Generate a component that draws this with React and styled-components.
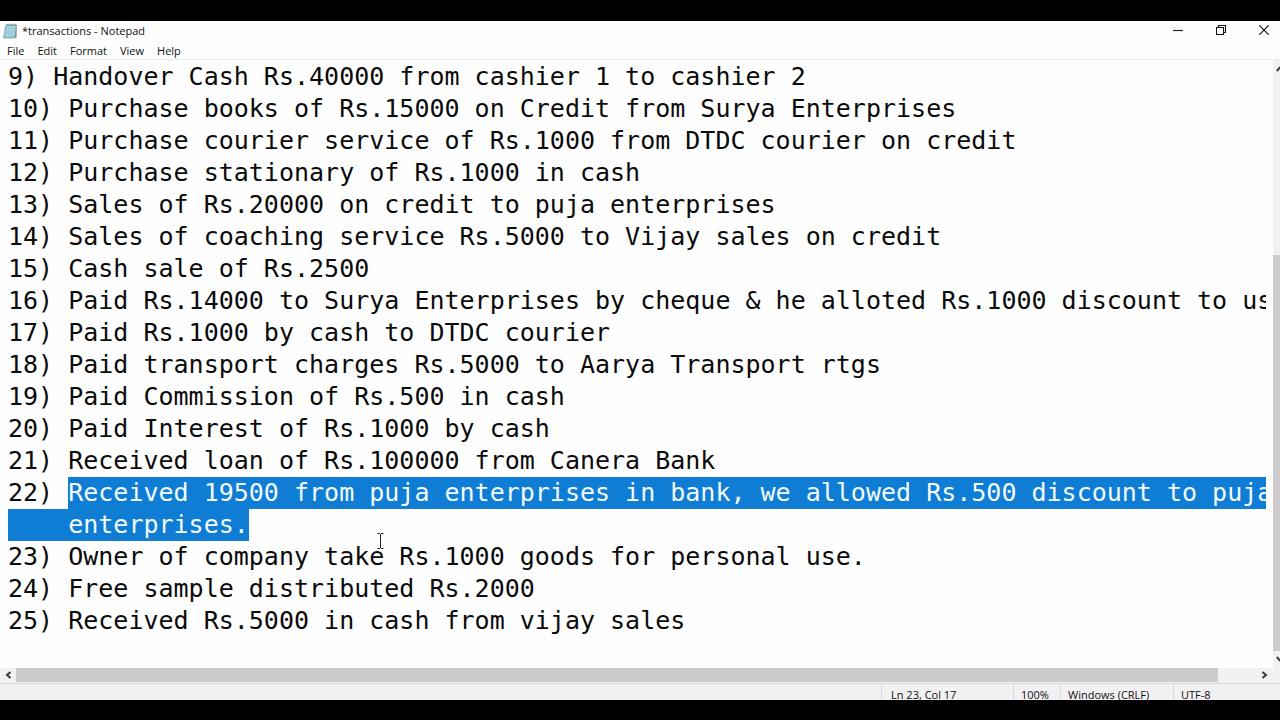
import React, { Component, createRef } from 'react';
import styled, { createGlobalStyle } from 'styled-components';

const GlobalStyle = createGlobalStyle`
  * {
    box-sizing: border-box;
  }

  body {
    margin: 0;
    background: #000;
  }
`

const Screen = styled.div`
  position: relative;
  display: flex;
  height: 100vh;
  padding: 21px 0 20px;
  background: #000;
  font-family: 'Open Sans', 'Noto Sans', sans-serif;
  font-size: 11px;
  color: #111;
  overflow: hidden;
`

const Window = styled.main`
  display: flex;
  flex: 1;
  flex-direction: column;
  min-width: 0;
  background: #fefefe;
`

const TitleBar = styled.header`
  display: flex;
  justify-content: space-between;
  align-items: flex-start;
  height: 20px;
  padding-left: 3px;
`

const TitleGroup = styled.div`
  display: flex;
  align-items: center;
  gap: 5px;
  height: 20px;
`

const Title = styled.h1`
  margin: 0;
  font-size: 11px;
  font-weight: 400;
  line-height: 20px;
`

const Controls = styled.div`
  display: flex;
  gap: 11px;
`

const PlainButton = styled.button`
  display: flex;
  justify-content: center;
  align-items: center;
  width: ${props => props.$width || 'auto'};
  height: ${props => props.$height || 'auto'};
  padding: 0;
  border: 0;
  background: none;
  color: inherit;
  font: inherit;
`

const MenuBar = styled.nav`
  display: flex;
  gap: 13px;
  height: 19px;
  padding-left: 7px;
  border-bottom: 1px solid #ededed;
`

const Body = styled.div`
  display: grid;
  flex: 1;
  grid-template-columns: minmax(0, 1fr) 7px;
  grid-template-rows: minmax(0, 1fr) 15px;
  min-height: 0;
`

const Editor = styled.textarea`
  display: block;
  width: calc(100% - 7px);
  height: 100%;
  margin: 0;
  padding: 1px 0 0 8px;
  border: 0;
  outline: 0;
  background: transparent;
  color: #0a0a0a;
  caret-color: transparent;
  font-family: 'DejaVu Sans Mono', 'Liberation Mono', monospace;
  font-size: 25px;
  line-height: 32px;
  white-space: pre;
  resize: none;
  overflow: hidden;

  &::selection {
    background: #0f7dd4;
    color: #f2fbff;
  }
`

const VerticalBar = styled.div`
  display: flex;
  flex-direction: column;
  background: #f1f1f1;
  overflow: hidden;
`

const HorizontalBar = styled.div`
  display: flex;
  grid-column: 1 / -1;
  padding-right: 7px;
  background: #f1f0f2;
`

const Track = styled.div`
  display: flex;
  flex: 1;
  flex-direction: ${props => props.$vertical ? 'column' : 'row'};
  justify-content: ${props => props.$vertical ? 'flex-end' : 'flex-start'};
`

const Thumb = styled.div`
  flex: 0 0 ${props => props.$size};
  margin-bottom: ${props => props.$vertical ? 0 : '1px'};
  background: #cdcbcd;
`

const StatusBar = styled.footer`
  display: flex;
  justify-content: flex-end;
  height: 17px;
  border-top: 1px solid #d9d8da;
  background: #f1f0f2;
  overflow: hidden;
`

const StatusCell = styled.span`
  flex: 0 0 ${props => props.$width};
  padding-left: ${props => props.$indent || '7px'};
  border-left: 1px solid #d9d8da;
  line-height: 22px;
  white-space: nowrap;
`

const Pointer = styled.svg`
  position: absolute;
  left: 377px;
  top: 533px;
`

const menus = ['File', 'Edit', 'Format', 'View', 'Help']

const selected = `Received 19500 from puja enterprises in bank, we allowed Rs.500 discount to puja
    enterprises.`

const text = `9) Handover Cash Rs.40000 from cashier 1 to cashier 2
10) Purchase books of Rs.15000 on Credit from Surya Enterprises
11) Purchase courier service of Rs.1000 from DTDC courier on credit
12) Purchase stationary of Rs.1000 in cash
13) Sales of Rs.20000 on credit to puja enterprises
14) Sales of coaching service Rs.5000 to Vijay sales on credit
15) Cash sale of Rs.2500
16) Paid Rs.14000 to Surya Enterprises by cheque & he alloted Rs.1000 discount to us
17) Paid Rs.1000 by cash to DTDC courier
18) Paid transport charges Rs.5000 to Aarya Transport rtgs
19) Paid Commission of Rs.500 in cash
20) Paid Interest of Rs.1000 by cash
21) Received loan of Rs.100000 from Canera Bank
22) ${selected}
23) Owner of company take Rs.1000 goods for personal use.
24) Free sample distributed Rs.2000
25) Received Rs.5000 in cash from vijay sales`

const NotepadIcon = () => (
  <svg width="14" height="16" viewBox="0 0 14 16" aria-hidden="true">
    <path d="M3 2h10.5l-1.4 13H.5z" fill="#8fc5cf" stroke="#6f9ca6" strokeWidth=".8" />
    <path d="M3.4 3h8.8l-1.1 10H1.8z" fill="#a9dbe2" />
    <path d="M3 5h8.5M2.8 7h8.5M2.6 9h8.5M2.3 11h8.5" stroke="#87bfca" strokeWidth=".7" />
    <path d="M12.2 14.6 13.5 3v11.6z" fill="#5e7f88" />
    <path d="M4 .8v2M6 .8v2M8 .8v2M10 .8v2M12 .8v2" stroke="#7d8b90" strokeWidth=".9" />
  </svg>
)

const Chevron = ({ d, width = 7, height = 8 }) => (
  <svg width={width} height={height} viewBox={`0 0 ${width} ${height}`} aria-hidden="true">
    <path d={d} fill="none" stroke="#3c3c3c" strokeWidth="2" />
  </svg>
)

class Notepad extends Component {
  editor = createRef()

  componentDidMount() {
    const start = text.indexOf(selected)
    this.editor.current.focus({ preventScroll: true })
    this.editor.current.setSelectionRange(start, start + selected.length)
    this.editor.current.scrollLeft = 0
  }

  render() {
    return (
      <Screen>
        <GlobalStyle />
        <Window>
          <TitleBar>
            <TitleGroup>
              <NotepadIcon />
              <Title>*transactions - Notepad</Title>
            </TitleGroup>
            <Controls>
              <PlainButton $width="32px" $height="18px" aria-label="Minimize">
                <svg width="10" height="10" viewBox="0 0 10 10">
                  <path d="M0 5.5h10" stroke="#222" strokeWidth="1.2" />
                </svg>
              </PlainButton>
              <PlainButton $width="32px" $height="18px" aria-label="Restore">
                <svg width="10" height="10" viewBox="0 0 10 10">
                  <path d="M.5 2.5h7v7h-7zM2.5 2.5v-2h7v7h-2" fill="none" stroke="#111" strokeWidth="1.1" />
                </svg>
              </PlainButton>
              <PlainButton $width="32px" $height="18px" aria-label="Close">
                <svg width="10" height="10" viewBox="0 0 10 10">
                  <path d="M.3.3l9.4 9.4M9.7.3.3 9.7" stroke="#111" strokeWidth="1.1" />
                </svg>
              </PlainButton>
            </Controls>
          </TitleBar>
          <MenuBar>
            {menus.map(menu => <PlainButton key={menu} $height="18px">{menu}</PlainButton>)}
          </MenuBar>
          <Body>
            <Editor ref={this.editor} aria-label="Text editor" wrap="off" spellCheck={false} defaultValue={text} />
            <VerticalBar>
              <PlainButton $width="14px" $height="17px" aria-label="Scroll up">
                <Chevron width={9} height={7} d="M.7 6 4.5 2 8.3 6" />
              </PlainButton>
              <Track $vertical>
                <Thumb $vertical $size="69%" />
              </Track>
              <PlainButton $width="14px" $height="17px" aria-label="Scroll down">
                <Chevron width={9} height={7} d="M.7 1 4.5 5 8.3 1" />
              </PlainButton>
            </VerticalBar>
            <HorizontalBar>
              <PlainButton $width="16px" $height="14px" aria-label="Scroll left">
                <Chevron d="M5.5 1 2 4l3.5 3" />
              </PlainButton>
              <Track>
                <Thumb $size="97%" />
              </Track>
              <PlainButton $width="18px" $height="14px" aria-label="Scroll right">
                <Chevron d="M1.5 1 5 4 1.5 7" />
              </PlainButton>
            </HorizontalBar>
          </Body>
          <StatusBar>
            <StatusCell $width="132px" $indent="9px">Ln 23, Col 17</StatusCell>
            <StatusCell $width="47px">100%</StatusCell>
            <StatusCell $width="113px">Windows (CRLF)</StatusCell>
            <StatusCell $width="107px">UTF-8</StatusCell>
          </StatusBar>
        </Window>
        <Pointer width="7" height="16" viewBox="0 0 7 16" aria-hidden="true">
          <path d="M.5.5H3M4 .5h2.5M3.5 1v14M.5 15.5H3M4 15.5h2.5" fill="none" stroke="#222" />
        </Pointer>
      </Screen>
    )
  }
}

export default Notepad;
